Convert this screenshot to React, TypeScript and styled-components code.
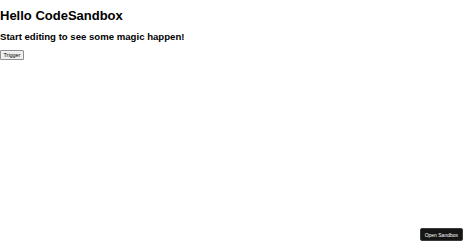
import React from "react";
import styled, { createGlobalStyle } from "styled-components";

const GlobalStyle = createGlobalStyle`
  html, body {
    margin: 0;
    padding: 0;
    background: #ffffff;
  }
  body {
    font-family: "Liberation Sans", Arial, sans-serif;
    color: #000000;
  }
`;

const Page = styled.div`
  display: flex;
  flex-direction: column;
  align-items: flex-start;
  padding-top: 8px;
`;

const Title = styled.h1`
  font-size: 13px;
  font-weight: 700;
  line-height: 15px;
  margin: 0 0 8px 0;
`;

const Subtitle = styled.h2`
  font-size: 9.6px;
  font-weight: 700;
  line-height: 12px;
  margin: 0 0 7px 0;
`;

const TriggerButton = styled.button`
  font-family: "Liberation Sans", Arial, sans-serif;
  font-size: 5.4px;
  line-height: 7px;
  padding: 0.5px 2.5px;
  margin: 0;
  color: #000000;
  background: #efefef;
  border: 1px solid #8f8f8f;
  border-radius: 1px;
`;

const OpenSandbox = styled.a`
  position: fixed;
  right: 11px;
  bottom: 7px;
  display: flex;
  align-items: center;
  height: 13px;
  padding: 0 4px;
  box-sizing: border-box;
  background: #151515;
  border: 0.5px solid #3a3a3a;
  border-radius: 2px;
  color: #ffffff;
  font-family: "Liberation Sans", Arial, sans-serif;
  font-size: 5px;
  text-decoration: none;
`;

export default function App() {
  return (
    <>
      <GlobalStyle />
      <Page>
        <Title>Hello CodeSandbox</Title>
        <Subtitle>Start editing to see some magic happen!</Subtitle>
        <TriggerButton type="button">Trigger</TriggerButton>
      </Page>
      <OpenSandbox href="#">Open Sandbox</OpenSandbox>
    </>
  );
}
